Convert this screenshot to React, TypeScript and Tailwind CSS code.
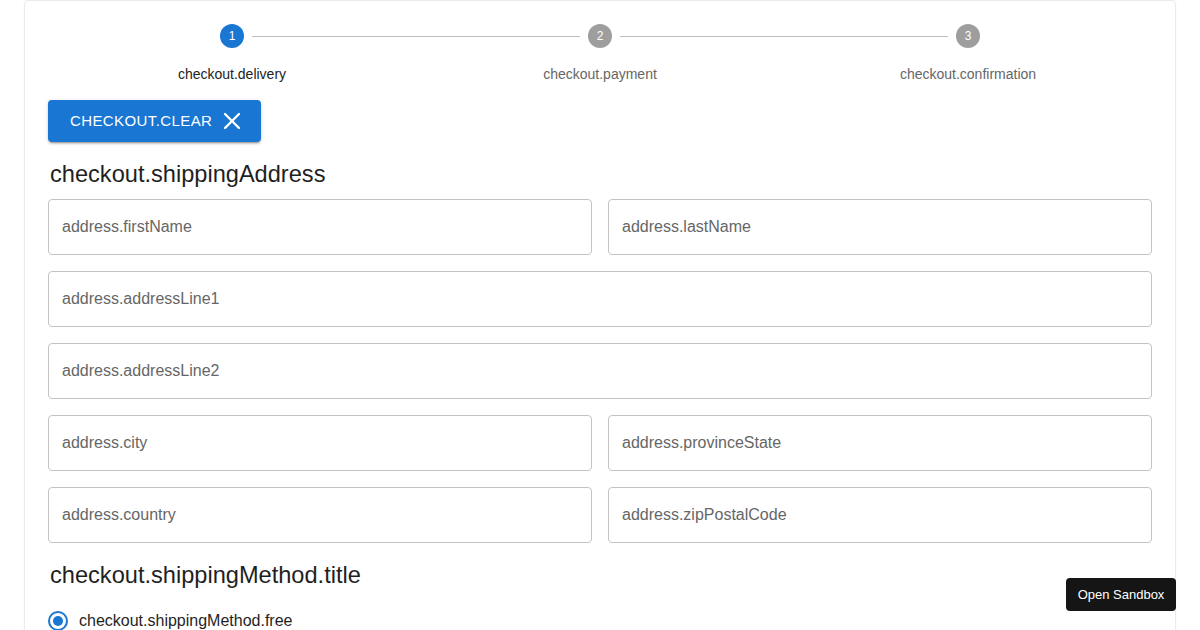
import { X } from "lucide-react";

const steps = ["checkout.delivery", "checkout.payment", "checkout.confirmation"];

const rows: string[][] = [
  ["address.firstName", "address.lastName"],
  ["address.addressLine1"],
  ["address.addressLine2"],
  ["address.city", "address.provinceState"],
  ["address.country", "address.zipPostalCode"],
];

function Field({ label }: { label: string }) {
  return (
    <div className="h-14 flex-1 rounded border border-[#c4c4c4] flex items-center px-[13px] text-base text-[#666]">
      {label}
    </div>
  );
}

export default function App() {
  return (
    <div className="min-h-screen bg-white px-6 font-['Liberation_Sans',Arial,sans-serif]">
      <div className="min-h-[640px] rounded border border-[#ebebeb] shadow-[0_1px_2px_rgba(0,0,0,0.06)] px-[23px] pt-[23px]">
        {/* Stepper */}
        <div className="flex">
          {steps.map((s, i) => (
            <div key={s} className="relative flex-1 flex flex-col items-center">
              {i > 0 && <div className="absolute top-3 left-[calc(-50%+20px)] right-[calc(50%+20px)] h-px bg-[#bdbdbd]" />}
              <div
                className={`w-6 h-6 rounded-full flex items-center justify-center text-xs text-white ${
                  i === 0 ? "bg-[#1976d2]" : "bg-[#9e9e9e]"
                }`}
              >
                {i + 1}
              </div>
              <div className={`mt-4 text-sm leading-5 ${i === 0 ? "text-[#222]" : "text-[#666]"}`}>{s}</div>
            </div>
          ))}
        </div>

        {/* Clear button */}
        <button className="mt-4 h-[42px] pl-[22px] pr-[21px] rounded bg-[#1976d2] text-white text-[15px] tracking-[0.4px] font-normal flex items-center gap-3 shadow-[0_3px_1px_-2px_rgba(0,0,0,0.2),0_2px_2px_0_rgba(0,0,0,0.14),0_1px_5px_0_rgba(0,0,0,0.12)]">
          CHECKOUT.CLEAR
          <span className="w-4 h-4 flex items-center justify-center">
            <X size={28} strokeWidth={2} className="shrink-0" />
          </span>
        </button>

        <h2 className="mt-4 text-[23.6px] leading-8 text-[#1f1f1f] pl-0.5">checkout.shippingAddress</h2>

        <div className="mt-[9px] flex flex-col gap-4">
          {rows.map((r, i) => (
            <div key={i} className="flex gap-4">
              {r.map((l) => (
                <Field key={l} label={l} />
              ))}
            </div>
          ))}
        </div>

        <h2 className="mt-4 text-[23.6px] leading-8 text-[#1f1f1f] pl-0.5">checkout.shippingMethod.title</h2>

        <div className="mt-[18px] flex items-center gap-[11px]">
          <div className="w-5 h-5 rounded-full border-2 border-[#1976d2] flex items-center justify-center">
            <div className="w-2.5 h-2.5 rounded-full bg-[#1976d2]" />
          </div>
          <span className="text-base text-[#1f1f1f]">checkout.shippingMethod.free</span>
        </div>
      </div>

      <div className="fixed right-6 bottom-[19px] h-[33px] w-[110px] rounded bg-[#151515] text-white text-[13px] flex items-center justify-center">
        Open Sandbox
      </div>
    </div>
  );
}
